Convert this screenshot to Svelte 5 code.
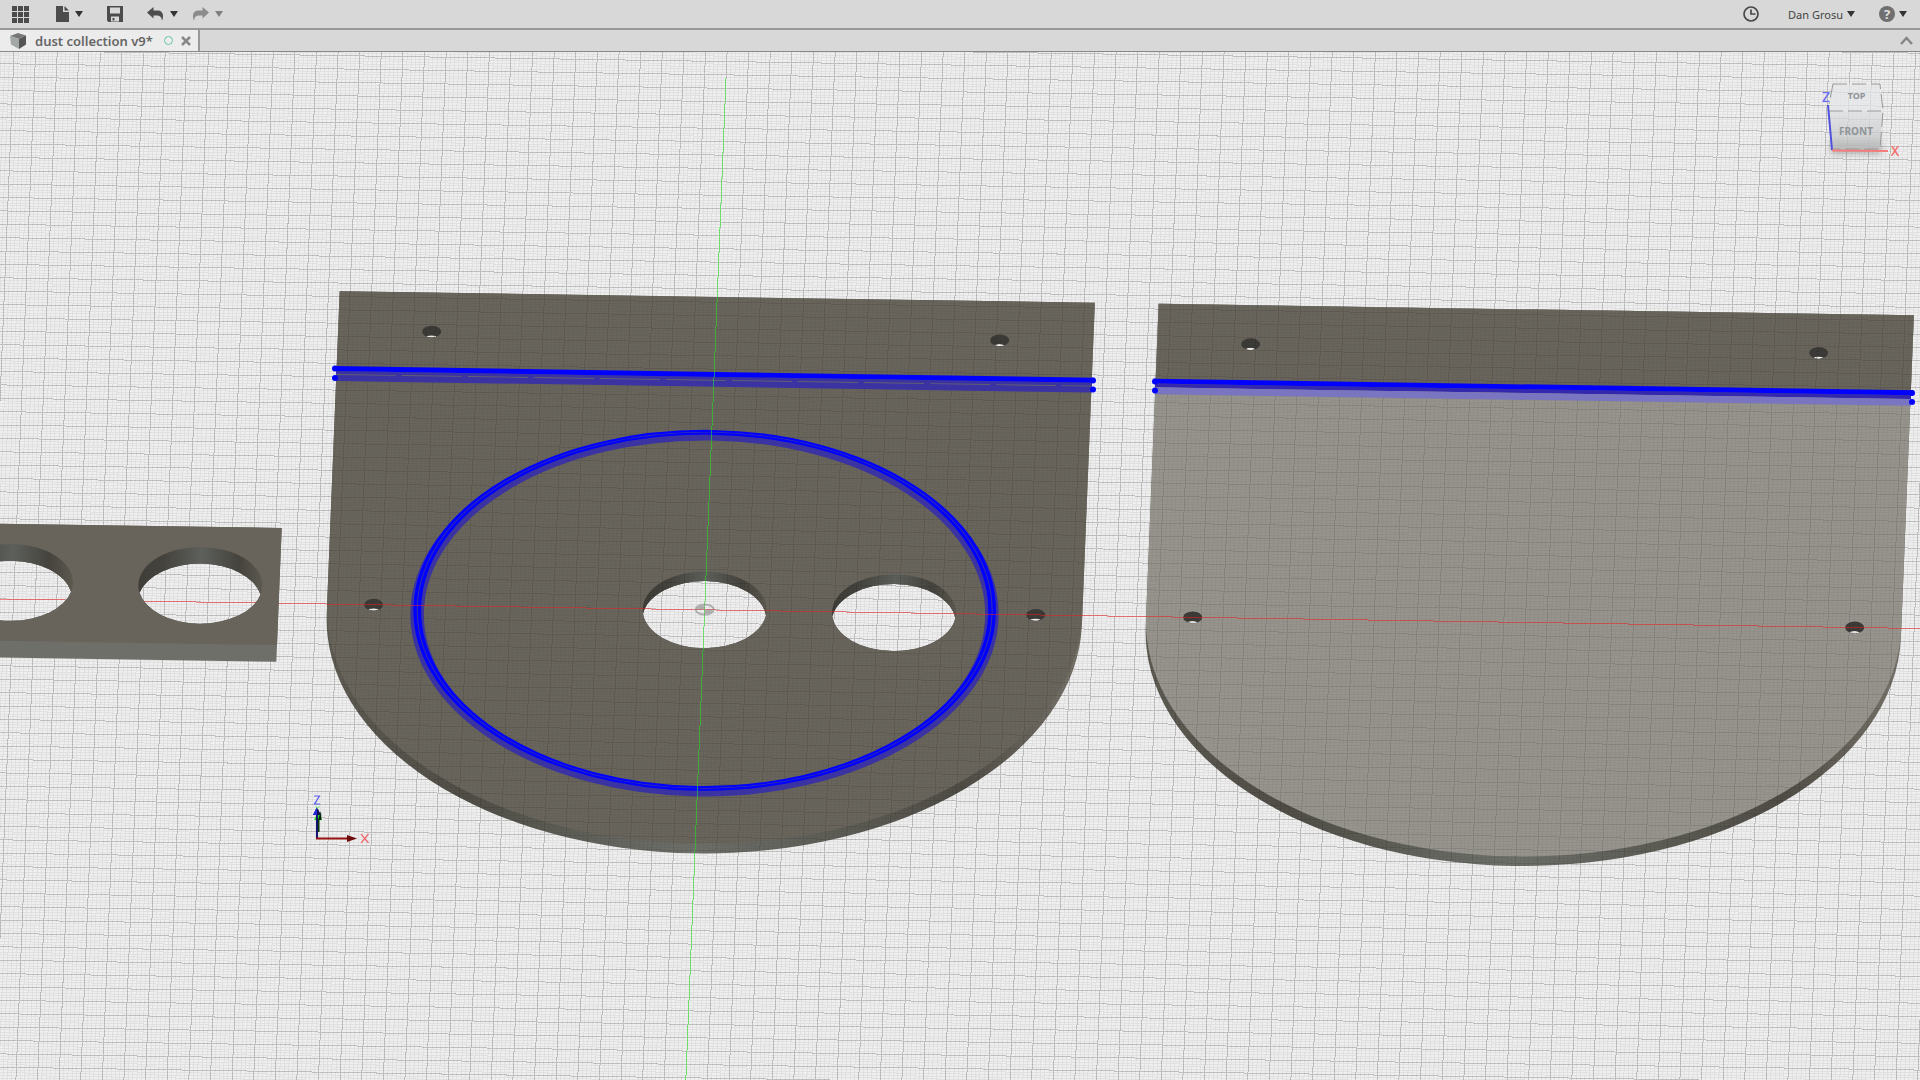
<script lang="ts">
	interface Hole {
		u: number;
		v: number;
		r: number;
	}

	// sketch plane -> screen, shared by every part
	const ORIGIN_X = 704.7;
	const ORIGIN_Y = 609.8;
	const plane = `matrix(1 0.0154 -0.0249 0.6195 ${ORIGIN_X} ${ORIGIN_Y})`;
	const coverOffset = 'translate(819 12.6)';

	// one major grid cell, in screen pixels
	const CELL_X = 21.597;
	const CELL_Y = 13.38;
	const SLOPE_X = 0.0154;
	const SLOPE_Y = -0.0402;

	const PLATE_DEPTH = 15.5;
	const STRIP_DEPTH = 27;

	const screws: Hole[] = [
		{ u: -284, v: -442, r: 9.5 },
		{ u: 284, v: -442, r: 9.5 },
		{ u: -331, v: 0, r: 9.5 },
		{ u: 331, v: 0, r: 9.5 }
	];
	const ports: Hole[] = [
		{ u: 0, v: 0, r: 62 },
		{ u: 189.3, v: 0, r: 62 }
	];
	const stripPorts: Hole[] = [
		{ u: -694.4, v: -27, r: 62 },
		{ u: -505, v: -27, r: 62 }
	];

	function disc({ u, v, r }: Hole) {
		return `M${u - r} ${v}A${r} ${r} 0 0 1 ${u + r} ${v}A${r} ${r} 0 0 1 ${u - r} ${v}Z`;
	}

	// the part of a hole you can see through
	function lens({ u, v, r }: Hole, depth: number) {
		const h = Math.sqrt(r * r - (depth * depth) / 4);
		const y = v + depth / 2;
		return `M${u - h} ${y}A${r} ${r} 0 0 1 ${u + h} ${y}A${r} ${r} 0 0 1 ${u - h} ${y}Z`;
	}

	function plate(depth: number, holes: Hole[]) {
		const cuts = holes.map((h) => lens(h, PLATE_DEPTH)).join('');
		return `M-377.6 -505H377.6V${depth}A377.6 377.6 0 0 1 -377.6 ${depth}Z${cuts}`;
	}

	function gridPath(step: number, skipMajor: boolean) {
		let d = '';
		for (let i = -40 * step; i <= 62 * step; i++) {
			if (skipMajor && i % step === 0) continue;
			const x = ORIGIN_X + (i * CELL_X) / step;
			const y = ORIGIN_Y + (i * CELL_X * SLOPE_X) / step;
			d += `M${(x - SLOPE_Y * (y - 40)).toFixed(1)} 40L${(x + SLOPE_Y * (1090 - y)).toFixed(1)} 1090`;
		}
		for (let i = -46 * step; i <= 40 * step; i++) {
			if (skipMajor && i % step === 0) continue;
			const y = ORIGIN_Y + (i * CELL_Y) / step;
			d += `M0 ${(y - ORIGIN_X * SLOPE_X).toFixed(1)}L1920 ${(y + (1920 - ORIGIN_X) * SLOPE_X).toFixed(1)}`;
		}
		return d;
	}

	const minor = gridPath(5, true);
	const major = gridPath(1, false);

	const baseHoles = [...screws, ...ports];
	const baseOutline = plate(PLATE_DEPTH, baseHoles);
	const coverOutline = plate(PLATE_DEPTH, screws);
	const stripCuts = stripPorts.map((h) => lens(h, STRIP_DEPTH)).join('');
</script>

<div class="app">
	<header class="toolbar">
		<button class="tool" aria-label="Data panel">
			<svg width="17" height="17" viewBox="0 0 17 17" fill="#4c4c4c">
				{#each [0, 6, 12] as y}
					{#each [0, 6, 12] as x}
						<rect {x} {y} width="5" height="5" />
					{/each}
				{/each}
			</svg>
		</button>
		<button class="tool file" aria-label="File">
			<svg width="13" height="16" viewBox="0 0 13 16" fill="#4c4c4c">
				<path d="M0 0h7v6h6v10H0zM8.500 0L13 4.500H8.500z" />
			</svg>
			<span class="caret"></span>
		</button>
		<button class="tool save" aria-label="Save">
			<svg width="16" height="16" viewBox="0 0 16 16">
				<path fill="#4c4c4c" fill-rule="evenodd" d="M0 0h16v16H1.500L0 14.500zM3 1.500v6h10v-6zM4 10.500v5h8v-5zM5.500 12h2v2.500h-2z" />
			</svg>
		</button>
		<button class="tool undo" aria-label="Undo">
			<svg width="17" height="14" viewBox="0 0 17 14" fill="#4c4c4c">
				<path d="M0 5.500L6.500 0v3.500h3.500c4 0 6 2 6 5.500 0 2-.4 3.500-1 4.500-.4-3.200-2-5-5-5H6.500v3z" />
			</svg>
			<span class="caret"></span>
		</button>
		<button class="tool redo" aria-label="Redo" disabled>
			<svg width="17" height="14" viewBox="0 0 17 14" fill="#8c8c8c">
				<path d="M17 5.500L10.500 0v3.500H7c-4 0-6 2-6 5.500 0 2 .4 3.500 1 4.500.4-3.200 2-5 5-5h3.500v3z" />
			</svg>
			<span class="caret light"></span>
		</button>
		<div class="spacer"></div>
		<button class="tool" aria-label="Job status">
			<svg width="16" height="16" viewBox="0 0 16 16" fill="none" stroke="#484848" stroke-width="1.700">
				<circle cx="8" cy="8" r="7" />
				<path d="M8 3.500V8h4.500" />
			</svg>
		</button>
		<button class="tool user">Dan Grosu<span class="caret"></span></button>
		<button class="tool help" aria-label="Help">
			<span class="question">?</span>
			<span class="caret"></span>
		</button>
	</header>

	<nav class="tabs">
		<div class="tab">
			<svg width="16" height="16" viewBox="0 0 16 16">
				<path d="M0 3L8 0l8 2.500L9 6z" fill="#777" />
				<path d="M0 3l9 3v10l-8-4.500z" fill="#a3a7a7" />
				<path d="M9 6l7-3.500v9L9 16z" fill="#555" />
			</svg>
			<span class="name">dust collection v9*</span>
			<span class="status"></span>
			<button class="close" aria-label="Close tab">
				<svg width="10" height="10" viewBox="0 0 10 10" stroke="#888" stroke-width="2.500">
					<path d="M1 1l8 8M9 1L1 9" />
				</svg>
			</button>
		</div>
		<button class="collapse" aria-label="Collapse">
			<svg width="13" height="9" viewBox="0 0 13 9" fill="none" stroke="#858585" stroke-width="2.500">
				<path d="M1 8l5.500-6L12 8" />
			</svg>
		</button>
	</nav>

	<main class="viewport">
		<svg class="scene" viewBox="0 52 1920 1028" preserveAspectRatio="xMidYMid slice" role="img" aria-label="Model">
			<defs>
				<linearGradient id="wall">
					<stop offset="0" stop-color="#5d5b52" />
					<stop offset="0.2" stop-color="#504e46" />
					<stop offset="0.42" stop-color="#666861" />
					<stop offset="0.5" stop-color="#6d6f69" />
					<stop offset="0.62" stop-color="#62635c" />
					<stop offset="0.85" stop-color="#504d46" />
					<stop offset="1" stop-color="#77736a" />
				</linearGradient>
				<linearGradient id="bore">
					<stop offset="0" stop-color="#3f3d37" />
					<stop offset="0.2" stop-color="#45433d" />
					<stop offset="0.5" stop-color="#5d605b" />
					<stop offset="0.8" stop-color="#45433d" />
					<stop offset="1" stop-color="#5c5950" />
				</linearGradient>
				<clipPath id="bodies">
					<path transform={plane} d={baseOutline} clip-rule="evenodd" />
					<path transform="{coverOffset} {plane}" d={coverOutline} clip-rule="evenodd" />
				</clipPath>
			</defs>

			<g class="grid">
				<path class="minor" d={minor} />
				<path class="major" d={major} />
			</g>

			<!-- base plate -->
			<g transform={plane}>
				<path d={baseOutline} fill="url(#wall)" fill-rule="evenodd" />
				<path d={plate(0, baseHoles)} fill="#69655c" fill-rule="evenodd" />
				{#each ports as hole}
					<path d={disc(hole) + lens(hole, PLATE_DEPTH)} fill="url(#bore)" fill-rule="evenodd" />
				{/each}
				{#each screws as hole}
					<path d={disc(hole) + lens(hole, PLATE_DEPTH)} fill="#3c3b37" fill-rule="evenodd" />
				{/each}
			</g>

			<!-- cover plate -->
			<g transform="{coverOffset} {plane}">
				<path d={coverOutline} fill="url(#wall)" fill-rule="evenodd" />
				<path d={plate(0, screws)} fill="#96948d" fill-rule="evenodd" />
				<path d="M-377.6 -505H377.6V-371H-377.6Z{lens(screws[0], PLATE_DEPTH)}{lens(screws[1], PLATE_DEPTH)}" fill="#69655c" fill-rule="evenodd" />
				{#each screws as hole}
					<path d={disc(hole) + lens(hole, PLATE_DEPTH)} fill="#3c3b37" fill-rule="evenodd" />
				{/each}
			</g>

			<g class="grid on-body" clip-path="url(#bodies)">
				<path class="minor" d={minor} />
				<path class="major" d={major} />
			</g>

			<!-- highlighted grooves -->
			<g transform={plane}>
				<rect x="-378" y="-376" width="756" height="16" fill="#3b33a2" />
				<path d="M-378 -370.500H378" stroke="#625f75" stroke-width="1.500" stroke-dasharray="60 6" />
				<path d="M-380 -380H380" class="edge" stroke-width="8" />
				<circle cx="0" cy="7.200" r="287.300" fill="none" stroke="#3b33a2" stroke-width="13.500" />
				<circle cx="0" cy="0.800" r="285.200" class="edge" stroke-width="3.400" />
				<circle cx="0" cy="0.800" r="289.500" class="edge" stroke-width="3.400" />
			</g>
			<g transform="{coverOffset} {plane}">
				<rect x="-378" y="-376" width="756" height="6" fill="#3429ae" />
				<rect x="-378" y="-370" width="756" height="11" fill="#7a75c0" />
				<path d="M-380 -380H380" class="edge" stroke-width="8" />
			</g>
			<g fill="#00f">
				<circle cx="335" cy="368.500" r="3" />
				<circle cx="335" cy="378" r="3" />
				<circle cx="1093" cy="380.500" r="3" />
				<circle cx="1093" cy="389.500" r="3" />
				<circle cx="1155" cy="381.500" r="3" />
				<circle cx="1155" cy="390.500" r="3" />
				<circle cx="1912" cy="393" r="3" />
				<circle cx="1912" cy="402" r="3" />
			</g>

			<g class="axes">
				<path d="M0 599L1920 628.500" stroke="#ff2020" />
				<path d="M726 78L685.800 1080" stroke="#20ff20" />
			</g>

			<!-- strip on the left -->
			<g transform={plane}>
				<path d="M-760 -121.500H-426V94.500H-760Z{stripCuts}" fill="#6d6f68" fill-rule="evenodd" />
				<path d="M-760 -121.500H-426V67.500H-760Z{stripCuts}" fill="#68645b" fill-rule="evenodd" />
				{#each stripPorts as hole}
					<path d={disc(hole) + lens(hole, STRIP_DEPTH)} fill="url(#bore)" fill-rule="evenodd" />
				{/each}
			</g>

			<!-- origin marker -->
			<g transform="translate(704.700 609.500)" opacity="0.6">
				<ellipse rx="9" ry="5" fill="none" stroke="#888" stroke-width="2" />
				<path d="M0 0H-8A8 4.500 0 0 1 0 -4.500ZM0 0H8A8 4.500 0 0 1 0 4.500Z" fill="#888" />
			</g>

			<!-- axis triad -->
			<g class="triad" fill="none">
				<path d="M318.500 832V818" stroke="#063c0a" stroke-width="2" />
				<path d="M314 820l4.500-9 3.500 9z" fill="#1ddc22" />
				<path d="M318 820l3-9 .5 9z" fill="#072b08" />
				<path d="M317 838V813" stroke="#14146e" stroke-width="2" />
				<path d="M313 815l4-8 4 8z" fill="#11114c" />
				<path d="M313 815l4-8v8z" fill="#2222e0" />
				<path d="M316 838.500h32" stroke="#9a1010" stroke-width="2" />
				<path d="M347 835l10 3.500-10 3.500z" fill="#6e0b0b" />
				<path d="M314 796h5.500l-5 8h5.500" stroke="#5a5af0" stroke-width="1.200" />
				<path d="M315.500 806l2 2.500 2-2.500" stroke="#6df06d" />
				<path d="M361 834l7.500 9M368.500 834l-7.500 9" stroke="#f06c6c" stroke-width="1.200" />
			</g>
		</svg>

		<svg class="cube" width="90" height="90" viewBox="1820 75 90 90" role="img" aria-label="View cube">
			<defs>
				<linearGradient id="cube-front" x2="0" y2="1">
					<stop offset="0" stop-color="#dfe1e4" />
					<stop offset="1" stop-color="#bfc0c0" />
				</linearGradient>
				<filter id="soft" x="-30%" y="-30%" width="160%" height="160%">
					<feGaussianBlur stdDeviation="3" />
				</filter>
			</defs>
			<path d="M1831 140h50v14h-50z" fill="#777" opacity="0.5" filter="url(#soft)" />
			<path d="M1833 84h47l3 27h-53z" fill="#e6e7e8" opacity="0.7" />
			<path d="M1829 111h54l-3 38h-48z" fill="url(#cube-front)" opacity="0.75" />
			<path d="M1833 84h47l3 27-3 38h-48M1829 111h54M1833 84l-4 20" fill="none" stroke="#999" stroke-dasharray="14 5" />
			<path d="M1828 105l4 45" stroke="#5050dc" stroke-width="2" />
			<path d="M1832 150.500l56 .5" stroke="#f47c7c" stroke-width="2" />
			<text x="1856.500" y="99" font-size="9">TOP</text>
			<text x="1856" y="135" font-size="10">FRONT</text>
			<text class="axis-z" x="1826" y="102" font-size="14">Z</text>
			<text class="axis-x" x="1895" y="156" font-size="14">X</text>
		</svg>
	</main>
</div>

<style>
	:global(body) {
		margin: 0;
	}

	.app {
		display: flex;
		flex-direction: column;
		height: 100vh;
		overflow: hidden;
		font-family: 'Noto Sans', 'Open Sans', sans-serif;
		color: #444;
	}

	button {
		display: flex;
		align-items: center;
		padding: 0;
		border: 0;
		background: none;
		font: inherit;
		color: inherit;
	}

	.toolbar {
		display: flex;
		align-items: center;
		height: 28px;
		padding: 0 13px 0 12px;
		background: #d8d8d8;
		border-bottom: 2px solid #989898;
	}

	.tool {
		gap: 6px;
		height: 28px;
		font-size: 11px;
	}

	.file {
		margin-left: 27px;
	}

	.save {
		margin-left: 24px;
	}

	.undo {
		margin-left: 24px;
	}

	.redo {
		margin-left: 14px;
	}

	.spacer {
		flex: 1;
	}

	.user {
		gap: 4px;
		margin-left: 29px;
	}

	.help {
		gap: 4px;
		margin-left: 24px;
	}

	.caret {
		border: 4px solid transparent;
		border-top: 6px solid #333;
		border-bottom: 0;
	}

	.caret.light {
		border-top-color: #808080;
	}

	.question {
		width: 16px;
		height: 16px;
		border-radius: 50%;
		background: #707070;
		color: #e0e0e0;
		font-size: 13px;
		font-weight: 700;
		line-height: 16px;
		text-align: center;
	}

	.tabs {
		display: flex;
		justify-content: space-between;
		height: 21px;
		background: #d8d8d8;
		border-bottom: 1px solid #888;
	}

	.tab {
		display: flex;
		align-items: center;
		padding: 0 7px 0 10px;
		background: #ececec;
		border-right: 2px solid #989898;
	}

	.name {
		margin-left: 9px;
		font-size: 13px;
		font-weight: 600;
		line-height: 22px;
		color: #666;
	}

	.status {
		width: 7px;
		height: 7px;
		margin: 0 8px 0 11px;
		border: 1px solid #6cc5ab;
		border-radius: 50%;
	}

	.collapse {
		margin-right: 7px;
	}

	.viewport {
		position: relative;
		flex: 1;
		min-height: 0;
		background: #efefef;
	}

	.scene {
		display: block;
		width: 100%;
		height: 100%;
	}

	.grid {
		fill: none;
		stroke: #000;
		shape-rendering: crispEdges;
	}

	.minor {
		stroke-opacity: 0.06;
	}

	.major {
		stroke-opacity: 0.2;
	}

	.on-body .minor {
		stroke-opacity: 0.04;
	}

	.on-body .major {
		stroke-opacity: 0.1;
	}

	.edge {
		fill: none;
		stroke: #00f;
	}

	.axes {
		stroke-opacity: 0.5;
		shape-rendering: crispEdges;
	}

	.cube {
		position: absolute;
		top: 23px;
		right: 10px;
	}

	.cube text {
		fill: #8f9499;
		font-weight: 700;
		text-anchor: middle;
	}

	.cube .axis-z {
		fill: #6c6cf0;
		font-weight: 500;
	}

	.cube .axis-x {
		fill: #f46c6c;
		font-weight: 500;
	}
</style>
